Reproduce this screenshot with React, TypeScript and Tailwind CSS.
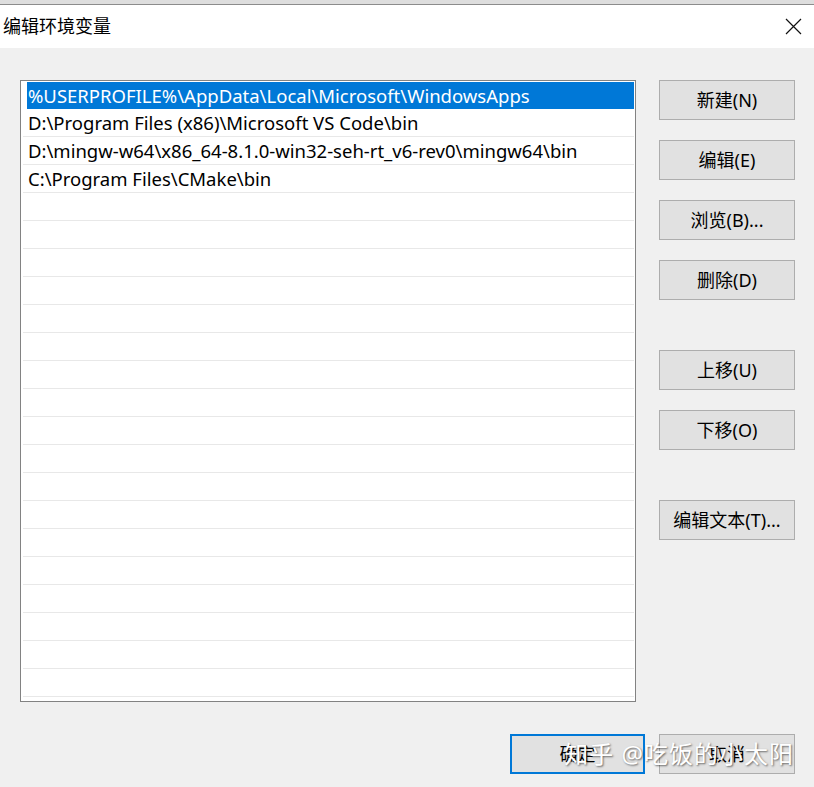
const paths = [
  "%USERPROFILE%\\AppData\\Local\\Microsoft\\WindowsApps",
  "D:\\Program Files (x86)\\Microsoft VS Code\\bin",
  "D:\\mingw-w64\\x86_64-8.1.0-win32-seh-rt_v6-rev0\\mingw64\\bin",
  "C:\\Program Files\\CMake\\bin",
];

const font = { fontFamily: '"Noto Sans", "Noto Sans CJK SC", sans-serif' };

function Btn({ label, className = "" }: { label: string; className?: string }) {
  return (
    <div
      className={`flex justify-center items-center bg-[#e1e1e1] border border-[#adadad] w-[136px] h-[40px] text-[18px] text-black ${className}`}
    >
      {label}
    </div>
  );
}

export default function App() {
  const rows = Array.from({ length: 23 }, (_, i) => paths[i] ?? "");

  return (
    <div className="flex flex-col bg-[#f0f0f0] w-[814px] h-[787px] overflow-hidden" style={font}>
      {/* Title bar */}
      <div className="bg-[#dedede] h-[4px]" />
      <div className="bg-[#8c8c8c] h-[1px]" />
      <div className="flex justify-between items-center bg-white pr-[12px] pl-[3px] h-[43px]">
        <span className="text-[18px] text-black">编辑环境变量</span>
        <svg width="17" height="17" viewBox="0 0 17 17">
          <path d="M1 1 L16 16 M16 1 L1 16" stroke="#111" strokeWidth="1.2" />
        </svg>
      </div>

      {/* Body */}
      <div className="flex gap-[23px] pt-[32px] pl-[20px]">
        <div className="bg-white border border-[#828282] w-[616px] h-[622px] overflow-hidden">
          <div className="flex flex-col pr-[1px] pl-[2px]">
            {rows.map((p, i) =>
              i === 0 ? (
                <div
                  key={i}
                  className="flex items-center bg-[#0078d7] mt-[1px] ml-[4px] pl-[1px] h-[27px] text-[18.5px] text-white whitespace-nowrap"
                >
                  {p}
                </div>
              ) : (
                <div
                  key={i}
                  className="flex items-center border-[#e8e8e8] border-b pl-[5px] h-[28px] text-[18.5px] text-black whitespace-nowrap"
                >
                  {p}
                </div>
              )
            )}
          </div>
        </div>

        <div className="flex flex-col">
          <Btn label="新建(N)" />
          <Btn label="编辑(E)" className="mt-[20px]" />
          <Btn label="浏览(B)..." className="mt-[20px]" />
          <Btn label="删除(D)" className="mt-[20px]" />
          <Btn label="上移(U)" className="mt-[50px]" />
          <Btn label="下移(O)" className="mt-[20px]" />
          <Btn label="编辑文本(T)..." className="mt-[50px]" />
        </div>
      </div>

      {/* Footer */}
      <div className="relative flex justify-end gap-[14px] pt-[32px] pr-[19px]">
        <div className="flex justify-center items-center bg-[#e1e1e1] border-[#0078d7] border-2 w-[135px] h-[40px] text-[18px] text-black">
          确定
        </div>
        <Btn label="取消" />
        {/* watermark */}
        <div
          className="absolute top-[34px] right-[20px] text-[24px] text-white tracking-[1px] pointer-events-none"
          style={{ textShadow: "1px 1px 2px rgba(0,0,0,0.55)" }}
        >
          知乎 @吃饭的小太阳
        </div>
      </div>
    </div>
  );
}
